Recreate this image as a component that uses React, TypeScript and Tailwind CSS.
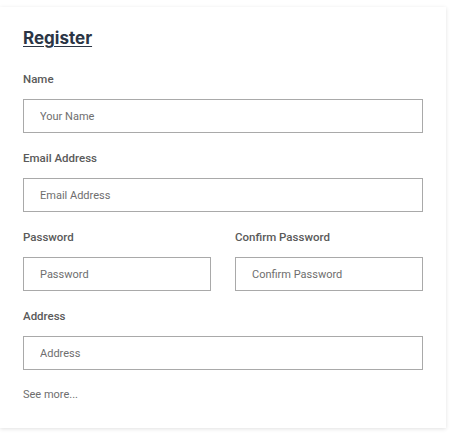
import React from 'react';

const Field: React.FC<{ label: string; placeholder: string; type?: string }> = ({ label, placeholder, type = 'text' }) => (
  <div className="flex flex-col">
    <label className="text-[11.5px] leading-4 font-medium text-[#5a5a5a]">{label}</label>
    <input
      type={type}
      placeholder={placeholder}
      className="mt-3 h-[34px] w-full border border-[#a9a9a9] bg-white px-4 text-[11px] text-[#333] placeholder:text-[#6e6e6e] outline-none"
    />
  </div>
);

export default function App() {
  return (
    <div className="min-h-screen bg-white pt-[7px]" style={{ fontFamily: 'Roboto, "Noto Sans", sans-serif' }}>
      <div className="w-[446px] bg-white px-[23px] pt-[19px] pb-[25px] shadow-[0_1px_4px_rgba(0,0,0,0.12)]">
        <h1
          className="text-[17px] leading-6 font-bold text-[#2b3545] underline underline-offset-2"
          style={{ fontFamily: 'Inter, sans-serif' }}
        >
          Register
        </h1>
        <div className="mt-[21px] flex w-[400px] flex-col gap-[17px]">
          <Field label="Name" placeholder="Your Name" />
          <Field label="Email Address" placeholder="Email Address" type="email" />
          <div className="grid grid-cols-2 gap-6">
            <Field label="Password" placeholder="Password" type="password" />
            <Field label="Confirm Password" placeholder="Confirm Password" type="password" />
          </div>
          <Field label="Address" placeholder="Address" />
          <a href="#" className="text-[11px] leading-4 text-[#6e6e6e]">See more...</a>
        </div>
      </div>
    </div>
  );
}
